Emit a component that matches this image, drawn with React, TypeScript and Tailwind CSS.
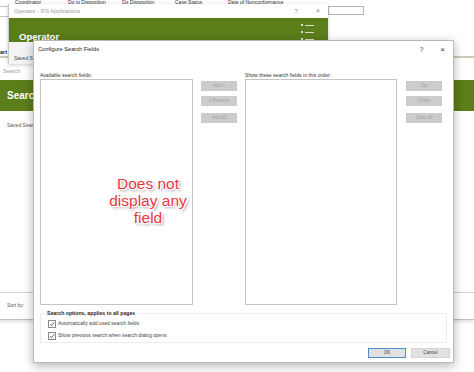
import React from 'react';

const sans = "font-['Liberation_Sans',Arial,sans-serif]";

function Check() {
  return (
    <span className="w-[8px] h-[8px] border border-[#8a8a8a] bg-white flex items-center justify-center">
      <svg width="6" height="6" viewBox="0 0 6 6">
        <path d="M0.8 3.1 L2.4 4.7 L5.3 1.2" fill="none" stroke="#555" strokeWidth="0.9" />
      </svg>
    </span>
  );
}

function GrayButton({ label, className = '' }: { label: string; className?: string }) {
  return (
    <div className={`w-[36px] h-[10px] bg-[#cccccc] text-[#a3a3a3] text-[4.6px] flex items-center justify-center ${className}`}>
      {label}
    </div>
  );
}

export default function App() {
  return (
    <div className={`relative w-[474px] h-[372px] overflow-hidden bg-white ${sans}`}>
      {/* background sheet header */}
      <div className="absolute top-0 left-0 w-full h-[5px] text-[5px] text-[#333] leading-[5px]">
        <span className="absolute left-[15px]">Coordinator</span>
        <span className="absolute left-[68px]">Do to Disposition</span>
        <span className="absolute left-[122px]">Do Disposition</span>
        <span className="absolute left-[175px]">Case Status</span>
        <span className="absolute left-[228px]">Date of Nonconformance</span>
      </div>
      <div className="absolute left-[328px] top-[6px] w-[36px] h-[9px] border border-[#b5b5b5] bg-white" />
      <div className="absolute left-0 top-[6px] w-[8px] h-[11px] border-y border-[#c8c8c8]" />
      <div className="absolute left-0 top-[49px] w-[8px] text-[5.5px] font-bold text-[#222] border-b border-[#999] leading-[7px]">art</div>

      {/* Search window */}
      <div className="absolute left-0 top-[56px] w-[474px] h-[264px] bg-white border-t-2 border-[#c7cdb8] border-b border-b-[#bdbdbd] shadow-[0_2px_3px_rgba(0,0,0,0.12)] flex flex-col">
        <div className="h-[22px] flex items-end pb-[5px] pl-[3px] text-[5.5px] text-[#9a9a9a]">Search</div>
        <div className="h-[31px] bg-[#5b7d1a] flex items-center pl-[7px] text-[10px] font-bold text-white">Search</div>
        <div className="pl-[7px] pt-[11px] text-[5px] text-[#555]">Saved Searches</div>
        <div className="mt-auto border-t border-[#cfcfcf] h-[27px] flex items-center pl-[7px] text-[5px] text-[#555]">Sort by:</div>
      </div>

      {/* Operator window */}
      <div className="absolute left-[8px] top-[4px] w-[320px] h-[60px] bg-white border-l border-[#c9c9c9] shadow-[0_1px_4px_rgba(0,0,0,0.2)] flex flex-col">
        <div className="h-[14px] flex items-center pl-[5px] text-[5.5px] text-[#9b9b9b]">
          <span>Operator - IFS Applications</span>
          <span className="ml-auto mr-[18px] text-[6px] text-[#888]">?</span>
          <span className="mr-[8px] text-[7px] text-[#888]">×</span>
        </div>
        <div className="h-[24px] bg-[#5b7d1a] flex items-end pl-[10px] pb-[1px] relative">
          <span className="text-[9.5px] font-bold text-white leading-[9px]">Operator</span>
          <div className="absolute left-[292px] top-[6px] flex flex-col gap-[5px]">
            {[0, 1, 2].map((i) => (
              <div key={i} className="flex items-center gap-[2px]">
                <span className="w-[2px] h-[2px] bg-[#d7e0c4]" />
                <span className="w-[9px] h-[1px] bg-[#d7e0c4]" />
              </div>
            ))}
          </div>
        </div>
        <div className="flex-1 bg-[#f4f4f4] flex items-start pt-[13px] pl-[5px] text-[5px] leading-[6px] text-[#444]">Saved Searches</div>
      </div>

      {/* Configure Search Fields dialog */}
      <div className="absolute left-[33px] top-[40px] w-[421px] h-[323px] bg-white border border-[#b9b9b9] shadow-[0_3px_10px_rgba(0,0,0,0.3)] flex flex-col">
        <div className="h-[17px] flex items-center pl-[4px] text-[5.7px] text-[#222]">
          <span>Configure Search Fields</span>
          <span className="ml-auto mr-[17px] text-[6.5px] text-[#333]">?</span>
          <span className="mr-[8px] text-[8px] text-[#333] leading-[8px]">×</span>
        </div>

        <div className="flex px-[6px] mt-[13px] gap-[8px]">
          <div className="flex flex-col w-[153px]">
            <div className="h-[8px] text-[5.1px] text-[#333] leading-[8px]">Available search fields:</div>
            <div className="h-[226px] border border-[#c4c4c4]" />
          </div>
          <div className="flex flex-col w-[36px] pt-[10px]">
            <GrayButton label="Add »" />
            <GrayButton label="« Remove" className="mt-[5px]" />
            <GrayButton label="Add All" className="mt-[7px]" />
          </div>
          <div className="flex flex-col w-[152px]">
            <div className="h-[8px] text-[5.1px] text-[#333] leading-[8px]">Show these search fields in this order:</div>
            <div className="h-[226px] border border-[#c4c4c4]" />
          </div>
          <div className="flex flex-col w-[36px] pt-[10px] ml-[1px]">
            <GrayButton label="Up" />
            <GrayButton label="Down" className="mt-[5px]" />
            <GrayButton label="Clear All" className="mt-[7px]" />
          </div>
        </div>

        <div className="relative mx-[6px] mt-[8px] h-[30px] border border-[#ececec] flex flex-col pl-[7px] pt-[6px] gap-[4px]">
          <span className="absolute left-[6px] top-[-4px] bg-white pr-[2px] text-[5.2px] font-bold text-[#222] leading-[7px]">
            Search options, applies to all pages
          </span>
          <div className="flex items-center gap-[2px] text-[5px] text-[#444]">
            <Check />
            <span>Automatically add used search fields</span>
          </div>
          <div className="flex items-center gap-[2px] text-[5px] text-[#444]">
            <Check />
            <span>Show previous search when search dialog opens</span>
          </div>
        </div>

        <div className="flex justify-end gap-[5px] mr-[3px] mt-[5px]">
          <div className="w-[38px] h-[10px] bg-[#e1e1e1] border border-[#4a8fd6] text-[4.6px] text-[#444] flex items-center justify-center">OK</div>
          <div className="w-[39px] h-[10px] bg-[#e1e1e1] border border-[#d4d4d4] text-[4.6px] text-[#444] flex items-center justify-center">Cancel</div>
        </div>
      </div>

      {/* annotation */}
      <div className="absolute left-[98px] top-[175px] w-[100px] text-center text-[15.5px] leading-[17px] text-[#e7373e] [text-shadow:-1px_-1px_0_#fff,1px_-1px_0_#fff,-1px_1px_0_#fff,1px_1px_0_#fff,2px_2px_3px_rgba(0,0,0,0.45)]">
        Does not<br />display any<br />field
      </div>
    </div>
  );
}
